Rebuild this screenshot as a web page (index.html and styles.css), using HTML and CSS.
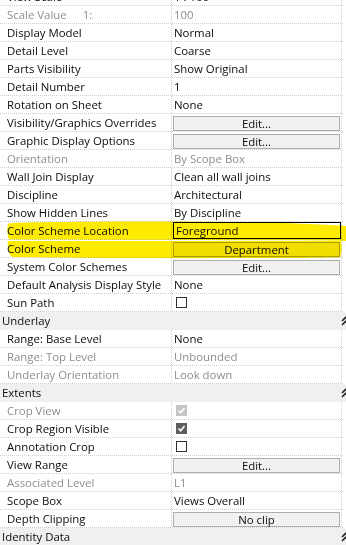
FILE: index.html
```html
<!DOCTYPE html>
<html>
<head>
<meta charset="utf-8">
<link rel="stylesheet" href="styles.css">
</head>
<body>
<div class="panel">
  <div class="row"><div class="label">View Scale</div><div class="value">1 : 100</div></div>
  <div class="row dim"><div class="label">Scale Value<span class="sv">1:</span></div><div class="value">100</div></div>
  <div class="row"><div class="label">Display Model</div><div class="value">Normal</div></div>
  <div class="row"><div class="label">Detail Level</div><div class="value">Coarse</div></div>
  <div class="row"><div class="label">Parts Visibility</div><div class="value">Show Original</div></div>
  <div class="row"><div class="label">Detail Number</div><div class="value">1</div></div>
  <div class="row"><div class="label">Rotation on Sheet</div><div class="value">None</div></div>
  <div class="row"><div class="label">Visibility/Graphics Overrides</div><div class="value"><div class="btn">Edit...</div></div></div>
  <div class="row"><div class="label">Graphic Display Options</div><div class="value"><div class="btn">Edit...</div></div></div>
  <div class="row dim"><div class="label">Orientation</div><div class="value">By Scope Box</div></div>
  <div class="row"><div class="label">Wall Join Display</div><div class="value">Clean all wall joins</div></div>
  <div class="row"><div class="label">Discipline</div><div class="value">Architectural</div></div>
  <div class="row"><div class="label">Show Hidden Lines</div><div class="value">By Discipline</div></div>
  <div class="row"><div class="label">Color Scheme Location</div><div class="value"><div class="field">Foreground</div></div></div>
  <div class="row"><div class="label">Color Scheme</div><div class="value"><div class="btn">Department</div></div></div>
  <div class="row"><div class="label">System Color Schemes</div><div class="value"><div class="btn">Edit...</div></div></div>
  <div class="row"><div class="label">Default Analysis Display Style</div><div class="value">None</div></div>
  <div class="row"><div class="label">Sun Path</div><div class="value"><span class="cb"></span></div></div>
  <div class="group"><span>Underlay</span><svg class="chev" width="9" height="10" viewBox="0 0 9 10"><path d="M1 5 L4.5 1.5 L8 5 M1 9 L4.5 5.5 L8 9" fill="none" stroke="#2a2a2a" stroke-width="1.6"/></svg></div>
  <div class="row"><div class="label">Range: Base Level</div><div class="value">None</div></div>
  <div class="row dim"><div class="label">Range: Top Level</div><div class="value">Unbounded</div></div>
  <div class="row dim"><div class="label">Underlay Orientation</div><div class="value">Look down</div></div>
  <div class="group"><span>Extents</span><svg class="chev" width="9" height="10" viewBox="0 0 9 10"><path d="M1 5 L4.5 1.5 L8 5 M1 9 L4.5 5.5 L8 9" fill="none" stroke="#2a2a2a" stroke-width="1.6"/></svg></div>
  <div class="row dim"><div class="label">Crop View</div><div class="value"><span class="cb checked disabled"><svg width="9" height="9" viewBox="0 0 9 9"><path d="M1.5 4.5 L3.7 6.7 L7.5 2" fill="none" stroke="#fff" stroke-width="1.6"/></svg></span></div></div>
  <div class="row"><div class="label">Crop Region Visible</div><div class="value"><span class="cb checked"><svg width="9" height="9" viewBox="0 0 9 9"><path d="M1.5 4.5 L3.7 6.7 L7.5 2" fill="none" stroke="#fff" stroke-width="1.6"/></svg></span></div></div>
  <div class="row"><div class="label">Annotation Crop</div><div class="value"><span class="cb"></span></div></div>
  <div class="row"><div class="label">View Range</div><div class="value"><div class="btn">Edit...</div></div></div>
  <div class="row dim"><div class="label">Associated Level</div><div class="value">L1</div></div>
  <div class="row"><div class="label">Scope Box</div><div class="value">Views Overall</div></div>
  <div class="row"><div class="label">Depth Clipping</div><div class="value"><div class="btn">No clip</div></div></div>
  <div class="group"><span>Identity Data</span><svg class="chev" width="9" height="10" viewBox="0 0 9 10"><path d="M1 5 L4.5 1.5 L8 5 M1 9 L4.5 5.5 L8 9" fill="none" stroke="#2a2a2a" stroke-width="1.6"/></svg></div>
</div>
<svg class="marker" width="346" height="545" viewBox="0 0 346 545">
  <path d="M8 224 C 9 222 60 222 120 221.5 C 200 221 290 222 346 226 L346 241 C 250 240 120 240 9 239.5 C 7 236 7 227 8 224 Z" fill="#ffeb00"/>
  <path d="M8 241 L 341 241 C 342 246 342 253 340 257.5 C 260 258.5 120 258.5 12 257 C 8 254 7 245 8 241 Z" fill="#ffeb00"/>
</svg>
</body>
</html>
```
FILE: styles.css
```css
html, body {
  margin: 0;
  padding: 0;
  background: #ffffff;
  overflow: hidden;
}
body {
  width: 346px;
  height: 545px;
  position: relative;
  font-family: "Open Sans", Lato, sans-serif;
  font-size: 11.4px;
  color: #0c0c0c;
}
.panel {
  width: 352px;
  margin-top: -12px;
}
.row {
  display: grid;
  grid-template-columns: 172px 170px;
  height: 17px;
  border-bottom: 1px dotted #cfcfcf;
  width: 343px;
}
.label {
  border-right: 1px dotted #cfcfcf;
  padding-left: 7px;
  line-height: 17px;
  white-space: nowrap;
  overflow: hidden;
}
.value {
  padding-left: 2px;
  line-height: 17px;
  white-space: nowrap;
  border-right: 1px dotted #cfcfcf;
  display: flex;
  align-items: center;
}
.dim .label, .dim .value {
  color: #8e8e8e;
}
.sv {
  margin-left: 16px;
}
.btn {
  box-sizing: border-box;
  align-self: flex-start;
  margin-top: 2px;
  margin-left: -1px;
  width: 167px;
  height: 15px;
  border: 1px solid #adadad;
  background: #f1f1f1;
  text-align: center;
  line-height: 13px;
  color: #0c0c0c;
}
.field {
  box-sizing: border-box;
  align-self: stretch;
  margin-left: -1px;
  width: 169px;
  border: 1px solid #000000;
  padding-left: 2px;
  line-height: 15px;
}
.cb {
  box-sizing: border-box;
  display: inline-flex;
  align-items: center;
  justify-content: center;
  width: 11px;
  height: 11px;
  margin-left: 2px;
  border: 1px solid #333333;
  background: #ffffff;
}
.cb.checked {
  background: #5f5f5f;
  border-color: #5f5f5f;
}
.cb.checked.disabled {
  background: #c4c4c4;
  border-color: #c4c4c4;
}
.group {
  height: 18px;
  background: #f0f0f0;
  display: flex;
  align-items: center;
  padding-left: 2px;
  line-height: 18px;
  position: relative;
}
.chev {
  position: absolute;
  left: 341px;
  top: 4px;
}
.marker {
  position: absolute;
  left: 0;
  top: 0;
  pointer-events: none;
  mix-blend-mode: multiply;
}
```
